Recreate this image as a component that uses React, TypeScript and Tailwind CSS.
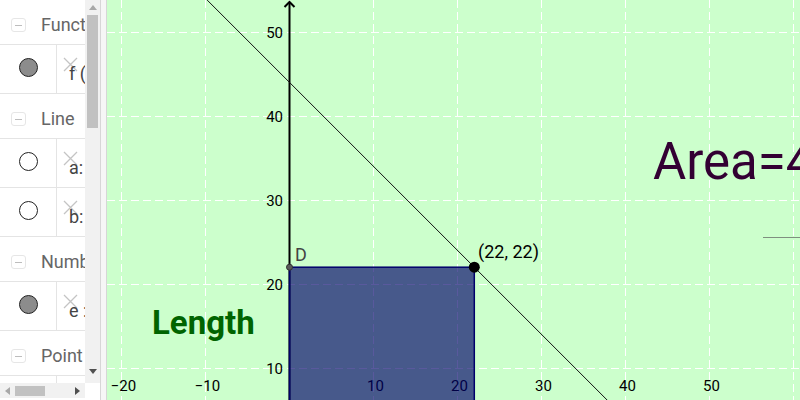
import React from 'react';

const X0 = 289.5;
const Y0 = 452;
const S = 8.4;
const px = (x: number) => X0 + x * S;
const py = (y: number) => Y0 - y * S;

type Row =
  | { kind: 'head'; label: string }
  | { kind: 'item'; text: string; filled: boolean };

const rows: Row[] = [
  { kind: 'head', label: 'Functions' },
  { kind: 'item', text: 'f (x) = 44 − x', filled: true },
  { kind: 'head', label: 'Line' },
  { kind: 'item', text: 'a: x = 22', filled: false },
  { kind: 'item', text: 'b: y = 22', filled: false },
  { kind: 'head', label: 'Number' },
  { kind: 'item', text: 'e : 22', filled: true },
  { kind: 'head', label: 'Point' },
  { kind: 'item', text: 'D = (0, 22)', filled: false },
];

const Header: React.FC<{ label: string }> = ({ label }) => (
  <div className="h-[45px] shrink-0 flex items-center pt-[6px] border-b border-[#e4e4e4]">
    <div className="ml-[11px] w-[15px] h-[14px] shrink-0 rounded-[3px] border border-[#e6e6e6] flex items-center justify-center">
      <div className="w-[7px] h-px bg-[#bdbdbd]" />
    </div>
    <span className="ml-[15px] text-[18px] leading-none text-[#666] whitespace-nowrap">{label}</span>
  </div>
);

const Item: React.FC<{ text: string; filled: boolean }> = ({ text, filled }) => (
  <div className="h-[49px] shrink-0 flex border-b border-[#e4e4e4]">
    <div className="w-[57px] shrink-0 flex items-center justify-center pb-[4px] border-r border-[#e4e4e4]">
      <div
        className={
          filled
            ? 'w-[19px] h-[19px] rounded-full bg-[#8c8c8c] border border-[#222]'
            : 'w-[19px] h-[19px] rounded-full bg-white border border-[#222]'
        }
      />
    </div>
    <div className="relative flex-1 pl-[12px] pt-[18px]">
      <svg className="absolute left-[6px] top-[12px]" width="15" height="15" viewBox="0 0 15 15">
        <path d="M1 1L14 14M14 1L1 14" stroke="#c4c4c4" strokeWidth="1.3" />
      </svg>
      <span className="relative text-[18px] leading-none text-[#444] whitespace-nowrap">{text}</span>
    </div>
  </div>
);

const Graphics: React.FC = () => {
  const gx = [-20, -10, 0, 10, 20, 30, 40, 50, 60];
  const gy = [10, 20, 30, 40, 50];
  const xl = [-20, -10, 10, 20, 30, 40, 50];
  return (
    <svg className="absolute inset-0" width="693" height="400" viewBox="107 0 693 400">
      {gx.map((v) => (
        <line key={'vx' + v} x1={px(v)} y1={0} x2={px(v)} y2={400} stroke="#fff" strokeWidth="1" strokeDasharray="8 4" />
      ))}
      {gy.map((v) => (
        <line key={'hy' + v} x1={107} y1={py(v) + 0.5} x2={800} y2={py(v) + 0.5} stroke="#fff" strokeWidth="1" strokeDasharray="8 4" />
      ))}
      {xl.map((v) => (
        <text key={'lx' + v} x={px(v) + 2} y={391} fontSize="15" textAnchor="middle" fill="#000">
          {v < 0 ? '−' + Math.abs(v) : v}
        </text>
      ))}
      {gy.map((v) => (
        <text key={'ly' + v} x={283} y={py(v) + 5.5} fontSize="15" textAnchor="end" fill="#000">
          {v}
        </text>
      ))}
      <line x1={X0} y1={2} x2={X0} y2={400} stroke="#000" strokeWidth="2" />
      <path d={`M${X0 - 5} 7L${X0} 2L${X0 + 5} 7`} fill="none" stroke="#000" strokeWidth="2" />
      <rect
        x={X0}
        y={py(22)}
        width={22 * S}
        height={200}
        fill="rgba(0,0,105,0.65)"
        stroke="#00006a"
        strokeWidth="1.5"
      />
      <line x1={px(44 - 53.81)} y1={0} x2={px(44 - (Y0 - 400) / S)} y2={400} stroke="#111" strokeWidth="1" />
      <circle cx={X0} cy={py(22)} r="3" fill="#5a5a5a" stroke="#333" strokeWidth="1" />
      <text x={295} y={261} fontSize="18" fill="#444">D</text>
      <circle cx={px(22)} cy={py(22)} r="5.5" fill="#000" />
      <text x={478} y={258} fontSize="18" fill="#000">(22, 22)</text>
      <text x={152} y={334} fontSize="33" fontWeight="700" fill="#006400">Length</text>
      <text x={653} y={179} fontSize="51" fill="#330033">Area=484</text>
      <line x1={763} y1={237.5} x2={800} y2={237.5} stroke="#7f8f7f" strokeWidth="1" />
    </svg>
  );
};

export default function App() {
  return (
    <div className="w-[800px] h-[400px] flex overflow-hidden bg-white font-['Roboto',sans-serif]">
      <div className="w-[100px] h-full grid grid-cols-[85px_15px] grid-rows-[383px_17px]">
        <div className="overflow-hidden flex flex-col">
          {rows.map((r, i) =>
            r.kind === 'head' ? (
              <Header key={i} label={r.label} />
            ) : (
              <Item key={i} text={r.text} filled={r.filled} />
            )
          )}
        </div>
        <div className="bg-[#f1f1f1] flex flex-col items-center">
          <div className="h-[15px] flex items-center justify-center">
            <svg width="8" height="5" viewBox="0 0 8 5"><path d="M0 5L4 0L8 5Z" fill="#a8a8a8" /></svg>
          </div>
          <div className="w-[11px] h-[113px] bg-[#c1c1c1]" />
          <div className="flex-1" />
          <div className="h-[18px] flex items-start justify-center pt-[4px]">
            <svg width="8" height="5" viewBox="0 0 8 5"><path d="M0 0L4 5L8 0Z" fill="#505050" /></svg>
          </div>
        </div>
        <div className="flex flex-col">
          <div className="h-[15px] bg-[#f1f1f1] flex items-center">
            <div className="w-[15px] flex justify-center">
              <svg width="5" height="8" viewBox="0 0 5 8"><path d="M5 0L0 4L5 8Z" fill="#a8a8a8" /></svg>
            </div>
            <div className="w-[30px] h-[10px] bg-[#c1c1c1]" />
            <div className="flex-1" />
            <div className="w-[15px] flex justify-center">
              <svg width="5" height="8" viewBox="0 0 5 8"><path d="M0 0L5 4L0 8Z" fill="#505050" /></svg>
            </div>
          </div>
        </div>
        <div className="bg-white" />
      </div>
      <div className="w-[7px] h-full bg-[#f6f6f6] border-l border-r border-[#d6d6d6]" />
      <div className="relative flex-1 h-full bg-[#ccffcc] overflow-hidden">
        <Graphics />
      </div>
    </div>
  );
}
